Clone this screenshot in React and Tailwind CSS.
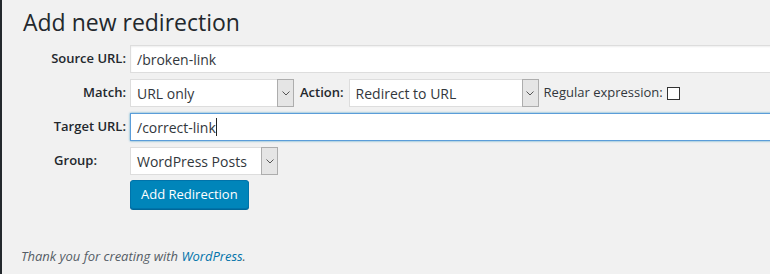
import React from "react";

const font = { fontFamily: '"Open Sans", "Noto Sans", sans-serif' };

const Arrow = () => (
    <div className="w-[17px] h-[28px] -my-px -mr-px bg-[#e5e5e5] border border-[#adadad] flex items-center justify-center">
        <svg width="8" height="5" viewBox="0 0 8 5" fill="none">
            <path d="M0.5 0.5 L4 4 L7.5 0.5" stroke="#555" strokeWidth="1" />
        </svg>
    </div>
);

const Select = ({ value, width }) => (
    <div className={`flex items-center h-[28px] bg-white border border-[#ddd] ${width}`}>
        <span className="flex-1 pl-[6px] text-[14px] text-[#32373c] whitespace-nowrap overflow-hidden">{value}</span>
        <Arrow />
    </div>
);

const Label = ({ children, className = "pr-[4px]" }) => (
    <div className={`w-[128px] shrink-0 text-right text-[13px] font-semibold text-[#23282d] ${className}`}>{children}</div>
);

export default function App() {
    return (
        <div style={font} className="w-[770px] h-[274px] bg-[#f1f1f1] border-l-2 border-[#23282d] overflow-hidden relative">
            <h2 className="text-[23px] leading-[29px] text-[#23282d] pl-[21px] pt-[8px] pb-[8px]">Add new redirection</h2>
            <div className="flex flex-col gap-[6px]">
                <div className="flex items-center">
                    <Label>Source URL:</Label>
                    <div className="h-[28px] flex-1 -mr-[10px] bg-white border border-[#ddd] shadow-[inset_0_1px_2px_rgba(0,0,0,0.07)] flex items-center pl-[6px] text-[14px] text-[#32373c]">/broken-link</div>
                </div>
                <div className="flex items-center">
                    <Label>Match:</Label>
                    <Select value="URL only" width="w-[164px]" />
                    <span className="ml-[6px] mr-[5px] text-[13px] font-semibold text-[#23282d]">Action:</span>
                    <Select value="Redirect to URL" width="w-[190px]" />
                    <span className="ml-[5px] text-[13px] text-[#32373c]">Regular expression:</span>
                    <span className="ml-[4px] w-[13px] h-[13px] bg-white border border-[#333] inline-block"></span>
                </div>
                <div className="flex items-center">
                    <Label>Target URL:</Label>
                    <div className="h-[28px] flex-1 -mr-[10px] bg-white border border-[#5b9dd9] shadow-[0_0_2px_rgba(30,140,190,0.8)] flex items-center pl-[6px] text-[14px] text-[#32373c]">
                        /correct-link<span className="w-px h-[18px] bg-[#222]"></span>
                    </div>
                </div>
                <div className="flex items-center">
                    <Label className="pr-[33px]">Group:</Label>
                    <Select value="WordPress Posts" width="w-[148px]" />
                </div>
                <div className="flex items-center -mt-[1px]">
                    <div className="w-[128px] shrink-0"></div>
                    <button className="h-[29px] px-[10px] bg-[#0085ba] border border-[#0073aa] rounded-[3px] shadow-[0_1px_0_#006799] text-white text-[13px]">Add Redirection</button>
                </div>
            </div>
            <p className="absolute left-[19px] top-[247px] text-[13px] italic text-[#555d66]">
                Thank you for creating with <span className="text-[#0073aa]">WordPress</span>.
            </p>
        </div>
    );
}
